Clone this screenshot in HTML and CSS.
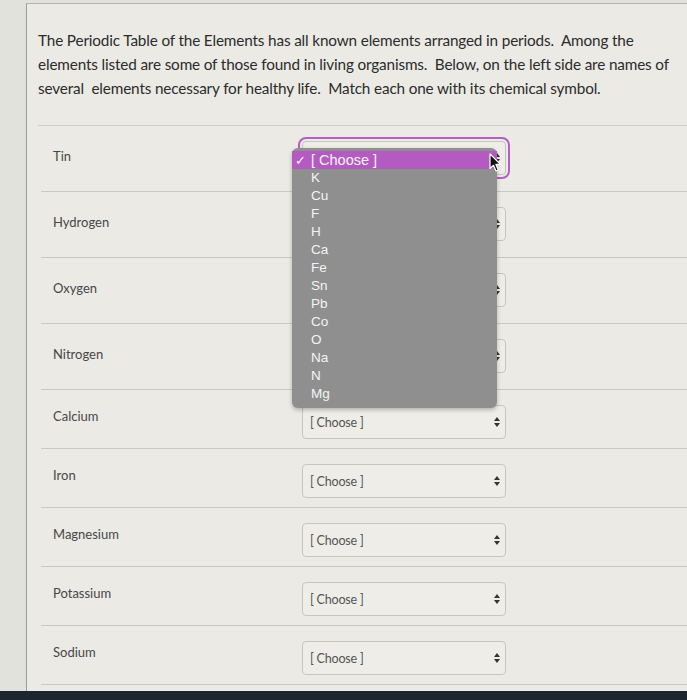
FILE: index.html
```html
<!DOCTYPE html>
<html>
<head>
<meta charset="utf-8">
<link rel="stylesheet" href="styles.css">
</head>
<body>
<div class="screen">
  <div class="panel">
    <p class="question">The Periodic Table of the Elements has all known elements arranged in periods.&nbsp; Among the elements listed are some of those found in living organisms.&nbsp; Below, on the left side are names of several&nbsp; elements necessary for healthy life.&nbsp; Match each one with its chemical symbol.</p>
    <div class="rows">
      <div class="row tall">
        <div class="label">Tin</div>
        <div class="select-wrap">
          <div class="select focused">
            <span class="value">[ Choose ]</span>
            <svg class="arrows" width="6" height="10" viewBox="0 0 6 10"><path d="M3 0L6 4H0Z M3 10L6 6H0Z" fill="#333"/></svg>
          </div>
          <div class="menu">
            <div class="opt active"><span class="check">✓</span>[ Choose ]</div>
            <div class="opt">K</div>
            <div class="opt">Cu</div>
            <div class="opt">F</div>
            <div class="opt">H</div>
            <div class="opt">Ca</div>
            <div class="opt">Fe</div>
            <div class="opt">Sn</div>
            <div class="opt">Pb</div>
            <div class="opt">Co</div>
            <div class="opt">O</div>
            <div class="opt">Na</div>
            <div class="opt">N</div>
            <div class="opt">Mg</div>
          </div>
          <svg class="cursor" width="12" height="19" viewBox="0 0 12 19"><path d="M1 1V15.5L4.5 12.3L7 18L9.3 17L6.9 11.4H11.5Z" fill="#111" stroke="#fff" stroke-width="1.2" stroke-linejoin="round"/></svg>
        </div>
      </div>
      <div class="row tall">
        <div class="label">Hydrogen</div>
        <div class="select-wrap"><div class="select"><span class="value">[ Choose ]</span><svg class="arrows" width="6" height="10" viewBox="0 0 6 10"><path d="M3 0L6 4H0Z M3 10L6 6H0Z" fill="#333"/></svg></div></div>
      </div>
      <div class="row tall">
        <div class="label">Oxygen</div>
        <div class="select-wrap"><div class="select"><span class="value">[ Choose ]</span><svg class="arrows" width="6" height="10" viewBox="0 0 6 10"><path d="M3 0L6 4H0Z M3 10L6 6H0Z" fill="#333"/></svg></div></div>
      </div>
      <div class="row tall">
        <div class="label">Nitrogen</div>
        <div class="select-wrap"><div class="select"><span class="value">[ Choose ]</span><svg class="arrows" width="6" height="10" viewBox="0 0 6 10"><path d="M3 0L6 4H0Z M3 10L6 6H0Z" fill="#333"/></svg></div></div>
      </div>
      <div class="row">
        <div class="label">Calcium</div>
        <div class="select-wrap"><div class="select"><span class="value">[ Choose ]</span><svg class="arrows" width="6" height="10" viewBox="0 0 6 10"><path d="M3 0L6 4H0Z M3 10L6 6H0Z" fill="#333"/></svg></div></div>
      </div>
      <div class="row">
        <div class="label">Iron</div>
        <div class="select-wrap"><div class="select"><span class="value">[ Choose ]</span><svg class="arrows" width="6" height="10" viewBox="0 0 6 10"><path d="M3 0L6 4H0Z M3 10L6 6H0Z" fill="#333"/></svg></div></div>
      </div>
      <div class="row">
        <div class="label">Magnesium</div>
        <div class="select-wrap"><div class="select"><span class="value">[ Choose ]</span><svg class="arrows" width="6" height="10" viewBox="0 0 6 10"><path d="M3 0L6 4H0Z M3 10L6 6H0Z" fill="#333"/></svg></div></div>
      </div>
      <div class="row">
        <div class="label">Potassium</div>
        <div class="select-wrap"><div class="select"><span class="value">[ Choose ]</span><svg class="arrows" width="6" height="10" viewBox="0 0 6 10"><path d="M3 0L6 4H0Z M3 10L6 6H0Z" fill="#333"/></svg></div></div>
      </div>
      <div class="row">
        <div class="label">Sodium</div>
        <div class="select-wrap"><div class="select"><span class="value">[ Choose ]</span><svg class="arrows" width="6" height="10" viewBox="0 0 6 10"><path d="M3 0L6 4H0Z M3 10L6 6H0Z" fill="#333"/></svg></div></div>
      </div>
    </div>
  </div>
  <div class="taskbar"></div>
</div>
</body>
</html>
```

FILE: styles.css
```css
* { box-sizing: border-box; }
html, body { margin: 0; padding: 0; }
body {
  background: #e2e2dd;
  font-family: Lato, "Open Sans", sans-serif;
  width: 687px;
  height: 700px;
  overflow: hidden;
}
.screen {
  display: flex;
  flex-direction: column;
  height: 700px;
}
.panel {
  flex: 1;
  margin-left: 26px;
  margin-top: 3px;
  background: #ebeae5;
  border-left: 1px solid #9c9c98;
  border-top: 1px solid #b4b4af;
  padding-top: 24px;
}
.question {
  margin: 0 0 25px 0;
  padding: 0 0 0 11px;
  font-size: 15.3px;
  line-height: 24px;
  color: #2c2c2c;
  letter-spacing: -0.15px;
}
.rows {
  margin-left: 11px;
  border-top: 1px solid #cfcfca;
}
.row {
  height: 59px;
  display: grid;
  grid-template-columns: 261px 1fr;
  border-bottom: 1px solid #cacac5;
  margin-left: 3px;
}
.row.tall {
  height: 66px;
}
.label {
  padding: 18px 0 0 12px;
  font-size: 13px;
  line-height: 16px;
  color: #474747;
}
.row.tall .label {
  padding-top: 22px;
}
.select-wrap {
  position: relative;
  padding-top: 15px;
}
.select {
  width: 204px;
  height: 34px;
  border: 1px solid #c6c6c0;
  border-radius: 4px;
  background: #eeede8;
  display: flex;
  align-items: center;
  justify-content: space-between;
  padding: 0 5px 0 7px;
}
.select .value {
  font-size: 12.5px;
  color: #555;
  letter-spacing: -0.2px;
}
.select.focused {
  outline: 2px solid #b75dc4;
  outline-offset: 2px;
}
.menu {
  position: absolute;
  top: 22px;
  left: -10px;
  width: 205px;
  background: #8f8f8f;
  border-radius: 6px;
  padding: 3px 0 5px 0;
  box-shadow: 0 2px 4px rgba(0,0,0,0.25);
  z-index: 5;
  font-family: "Liberation Sans", Arial, sans-serif;
}
.opt {
  height: 18px;
  line-height: 18px;
  padding-left: 19px;
  color: #f4f4f4;
  font-size: 13.5px;
}
.opt.active {
  background: #b45bc1;
  font-size: 14.5px;
  padding-left: 3px;
}
.check {
  display: inline-block;
  width: 13px;
  font-size: 13px;
  margin-right: 3px;
}
.cursor {
  position: absolute;
  top: 27px;
  left: 187px;
  z-index: 6;
}
.taskbar {
  height: 9px;
  background: #1d2530;
}
```
